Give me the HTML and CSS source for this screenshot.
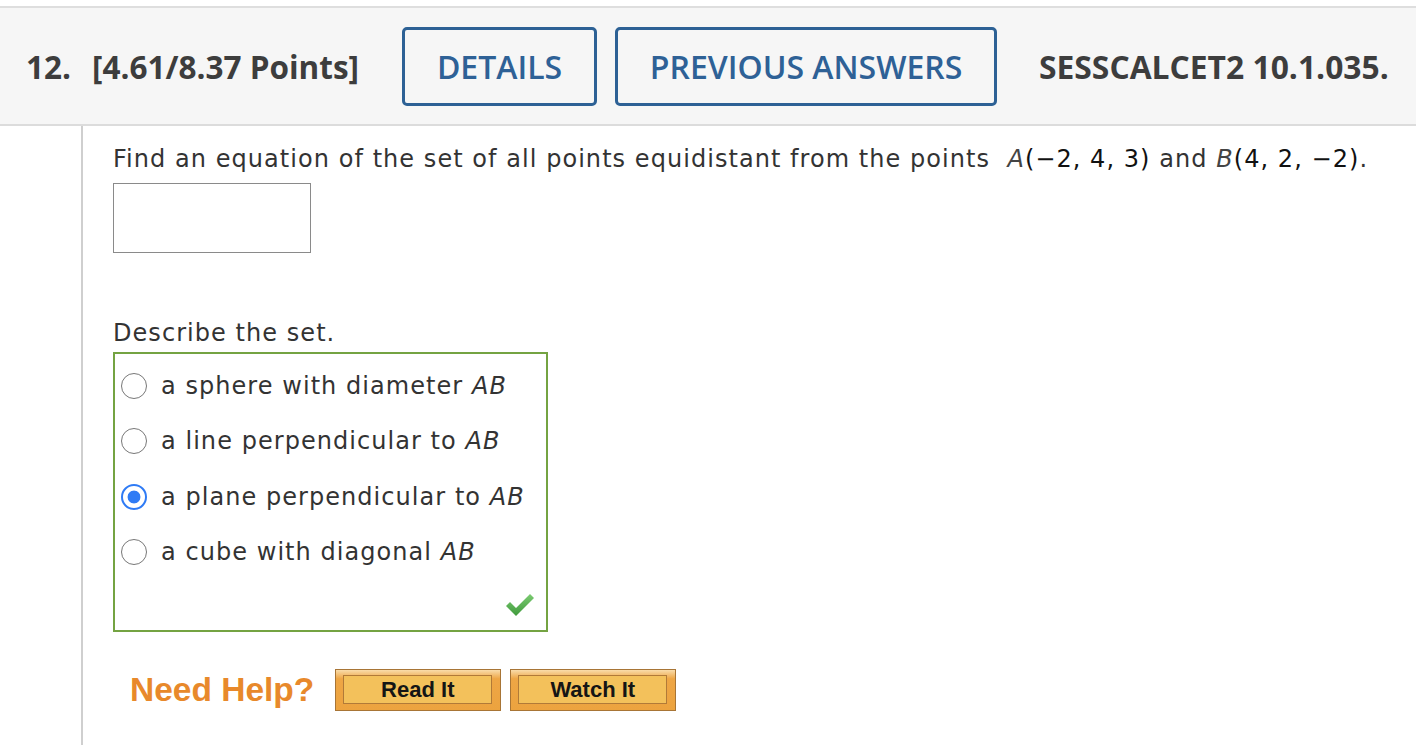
FILE: index.html
```html
<!DOCTYPE html>
<html>
<head>
<meta charset="utf-8">
<link rel="stylesheet" href="styles.css">
</head>
<body>
<div class="page">
  <header class="qhead">
    <div class="qnum"><span class="num">12.</span><span class="pts">[4.61/8.37 Points]</span></div>
    <button class="hbtn details">DETAILS</button>
    <button class="hbtn prev">PREVIOUS ANSWERS</button>
    <div class="qid">SESSCALCET2 10.1.035.</div>
  </header>
  <main class="qbody">
    <div class="gutter"></div>
    <div class="content">
      <p class="qtext">Find an equation of the set of all points equidistant from the points&nbsp; <span class="var">A</span><span class="num-m">(−2, 4, 3)</span> and <span class="var">B</span><span class="num-m">(4, 2, −2)</span>.</p>
      <div class="answer-box"></div>
      <p class="describe">Describe the set.</p>
      <div class="choices">
        <label class="choice"><span class="radio"></span><span>a sphere with diameter <i>AB</i></span></label>
        <label class="choice"><span class="radio"></span><span>a line perpendicular to <i>AB</i></span></label>
        <label class="choice"><span class="radio on"></span><span>a plane perpendicular to <i>AB</i></span></label>
        <label class="choice"><span class="radio"></span><span>a cube with diagonal <i>AB</i></span></label>
        <div class="check-row">
          <svg class="check" width="32" height="26" viewBox="0 0 32 26">
            <defs>
              <linearGradient id="cg" x1="0" y1="0" x2="0" y2="1">
                <stop offset="0" stop-color="#7ccb72"/>
                <stop offset="1" stop-color="#3f9a3c"/>
              </linearGradient>
            </defs>
            <path d="M2 14 L6 10 L12 16 L26 2 L30 6 L12 24 Z" fill="url(#cg)"/>
          </svg>
        </div>
      </div>
      <div class="help">
        <span class="need">Need Help?</span>
        <button class="help-btn"><span>Read It</span></button>
        <button class="help-btn"><span>Watch It</span></button>
      </div>
    </div>
  </main>
</div>
</body>
</html>
```

FILE: styles.css
```css
html, body {
  margin: 0;
  padding: 0;
  background: #fff;
}
.page {
  padding-top: 6px;
  height: 739px;
  display: flex;
  flex-direction: column;
}
.qhead {
  border-top: 2px solid #dedede;
  border-bottom: 2px solid #dcdcdc;
  background: #f6f6f6;
  height: 116px;
  display: flex;
  align-items: center;
  padding-left: 26px;
  font-family: "Open Sans", sans-serif;
  color: #3d3d3d;
}
.qnum {
  font-weight: 700;
  font-size: 31.5px;
  display: flex;
  gap: 21px;
  white-space: nowrap;
}
.hbtn {
  font-family: "Open Sans", sans-serif;
  font-weight: 600;
  font-size: 32px;
  color: #2e6196;
  background: transparent;
  border: 3px solid #2d6195;
  border-radius: 5px;
  height: 79px;
  padding: 0;
}
.details {
  margin-left: 43px;
  width: 195px;
}
.prev {
  margin-left: 18px;
  width: 382px;
}
.qid {
  margin-left: 42px;
  font-weight: 700;
  font-size: 31.8px;
  white-space: nowrap;
}
.qbody {
  flex: 1;
  display: flex;
}
.gutter {
  width: 81px;
  border-right: 2px solid #cfcfcf;
}
.content {
  padding-left: 30px;
  font-family: "DejaVu Sans", Verdana, sans-serif;
  font-size: 24px;
  letter-spacing: 1.05px;
  color: #333;
}
.qtext {
  margin: 15px 0 0;
  line-height: 36px;
  white-space: nowrap;
}
.var {
  font-style: italic;
  color: #444;
}
.num-m {
  color: #111;
}
.answer-box {
  margin-top: 6px;
  width: 198px;
  height: 70px;
  box-sizing: border-box;
  border: 1.5px solid #8a8a8a;
  background: #fff;
}
.describe {
  margin: 62px 0 0;
  line-height: 36px;
}
.choices {
  margin-top: 1px;
  width: 435px;
  height: 280px;
  border: 2px solid #74a342;
  padding: 4px 0 0 6px;
  box-sizing: border-box;
  display: flex;
  flex-direction: column;
}
.choice {
  display: flex;
  align-items: center;
  height: 55.5px;
  gap: 14px;
  white-space: nowrap;
}
.radio {
  width: 26px;
  height: 26px;
  box-sizing: border-box;
  border-radius: 50%;
  border: 1.5px solid #777;
  background: #fff;
  flex: none;
}
.radio.on {
  border: 2.5px solid #2f7bf5;
  background: radial-gradient(circle, #2f7bf5 0 6px, #fff 6.8px);
}
.check-row {
  flex: 1;
  display: flex;
  justify-content: flex-end;
  align-items: flex-end;
  padding: 0 10px 12px 0;
}
.help {
  margin-top: 37px;
  display: flex;
  align-items: center;
  height: 42px;
  padding-left: 17px;
  letter-spacing: 0;
}
.need {
  font-family: "Liberation Sans", Arial, sans-serif;
  font-weight: 700;
  font-size: 33.5px;
  color: #e8892b;
  margin-right: 21px;
}
.help-btn {
  width: 166px;
  height: 42px;
  margin-right: 9px;
  padding: 5px 8px 6px 7px;
  border: 1px solid #a87536;
  background: linear-gradient(#f9dcaa 0, #eea645 22%, #eca33f 100%);
  box-sizing: border-box;
  display: flex;
}
.help-btn span {
  flex: 1;
  border: 1px solid #b17a38;
  background: #f3c15b;
  font-family: "Liberation Sans", Arial, sans-serif;
  font-weight: 700;
  font-size: 22px;
  color: #151515;
  display: flex;
  align-items: center;
  justify-content: center;
}
```
